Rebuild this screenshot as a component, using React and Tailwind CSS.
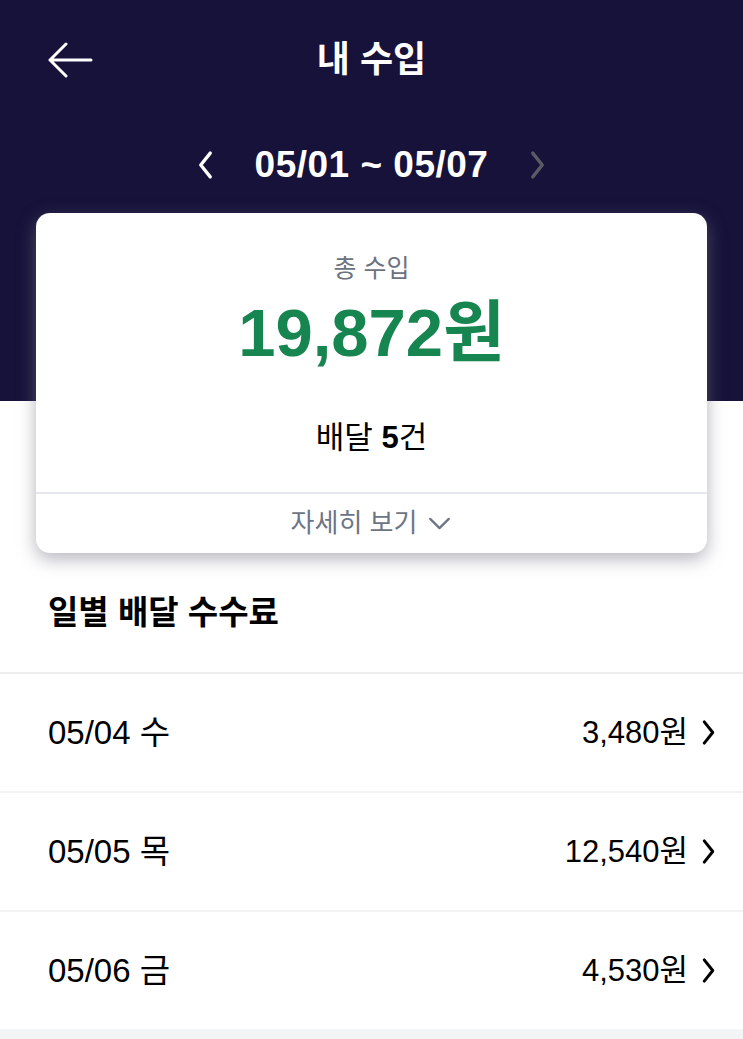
import React from "react";

const rows = [
  { date: "05/04 수", amount: "3,480원" },
  { date: "05/05 목", amount: "12,540원" },
  { date: "05/06 금", amount: "4,530원" },
];

function Chevron({ dir = "right", className = "" }) {
  const d = dir === "right" ? "M4 2 L12 12 L4 22" : "M12 2 L4 12 L12 22";
  return (
    <svg viewBox="0 0 16 24" className={className} fill="none" stroke="currentColor" strokeWidth="2.8" strokeLinecap="round" strokeLinejoin="round">
      <path d={d} />
    </svg>
  );
}

export default function App() {
  return (
    <div className="min-h-[1039px] bg-[#f3f4f6] font-['Liberation_Sans','Noto_Sans_CJK_KR',sans-serif]">
      {/* ── header ─────────────────────────────── */}
      <div className="h-[401px] bg-[#16123a] text-white">
        <div className="relative flex h-[120px] items-center justify-center">
          <svg viewBox="0 0 46 36" className="absolute left-[47px] top-[42px] h-[36px] w-[46px]" fill="none" stroke="currentColor" strokeWidth="3" strokeLinecap="round" strokeLinejoin="round">
            <path d="M44 18 H3 M19 2 L3 18 L19 34" />
          </svg>
          <h1 className="text-[36px] font-bold leading-[44px]">내 수입</h1>
        </div>
        <div className="flex h-[90px] items-center justify-center gap-[40px]">
          <Chevron dir="left" className="h-[30px] w-[19px] text-white" />
          <span className="text-[37px] font-bold leading-[44px] tracking-[0.5px]">05/01 ~ 05/07</span>
          <Chevron dir="right" className="h-[30px] w-[19px] text-[#5b5b66]" />
        </div>
      </div>

      {/* ── summary card ───────────────────────── */}
      <div className="flow-root bg-white">
        <div className="relative mx-[36px] -mt-[188px] rounded-[14px] bg-white shadow-[0_6px_18px_rgba(120,120,135,0.55)]">
          <div className="flex flex-col items-center pt-[37px]">
            <div className="text-[25px] leading-[37px] text-[#6b7280]">총 수입</div>
            <div className="mt-[10px] text-[67px] font-bold leading-[72px] text-[#17854f]">19,872원</div>
            <div className="mb-[31px] mt-[46px] text-[31px] leading-[46px] text-black">
              배달 <span className="font-bold">5</span>건
            </div>
          </div>
          <div className="flex h-[61px] items-center justify-center gap-[10px] border-t-2 border-[#e5e8ec] text-[26px] text-[#6b7585]">
            <span>자세히 보기</span>
            <svg viewBox="0 0 24 14" className="h-[13px] w-[25px]" fill="none" stroke="currentColor" strokeWidth="2.4" strokeLinecap="round" strokeLinejoin="round">
              <path d="M2 2 L12 12 L22 2" />
            </svg>
          </div>
        </div>

        {/* ── daily list ───────────────────────── */}
        <div className="flex h-[119px] items-center px-[48px]">
          <h2 className="text-[33px] font-bold leading-[44px] text-black">일별 배달 수수료</h2>
        </div>
        <div>
          {rows.map((r, i) => (
            <div key={r.date} className={`flex h-[119px] items-center justify-between border-t-2 pl-[48px] pr-[26px] ${i === 0 ? "border-[#ededed]" : "border-[#f3f3f3]"}`}>
              <span className="text-[33px] leading-[44px] text-black">{r.date}</span>
              <span className="flex items-center gap-[12px] text-[31px] leading-[44px] text-black">
                {r.amount}
                <Chevron dir="right" className="h-[27px] w-[17px] text-black" />
              </span>
            </div>
          ))}
        </div>
      </div>
    </div>
  );
}
